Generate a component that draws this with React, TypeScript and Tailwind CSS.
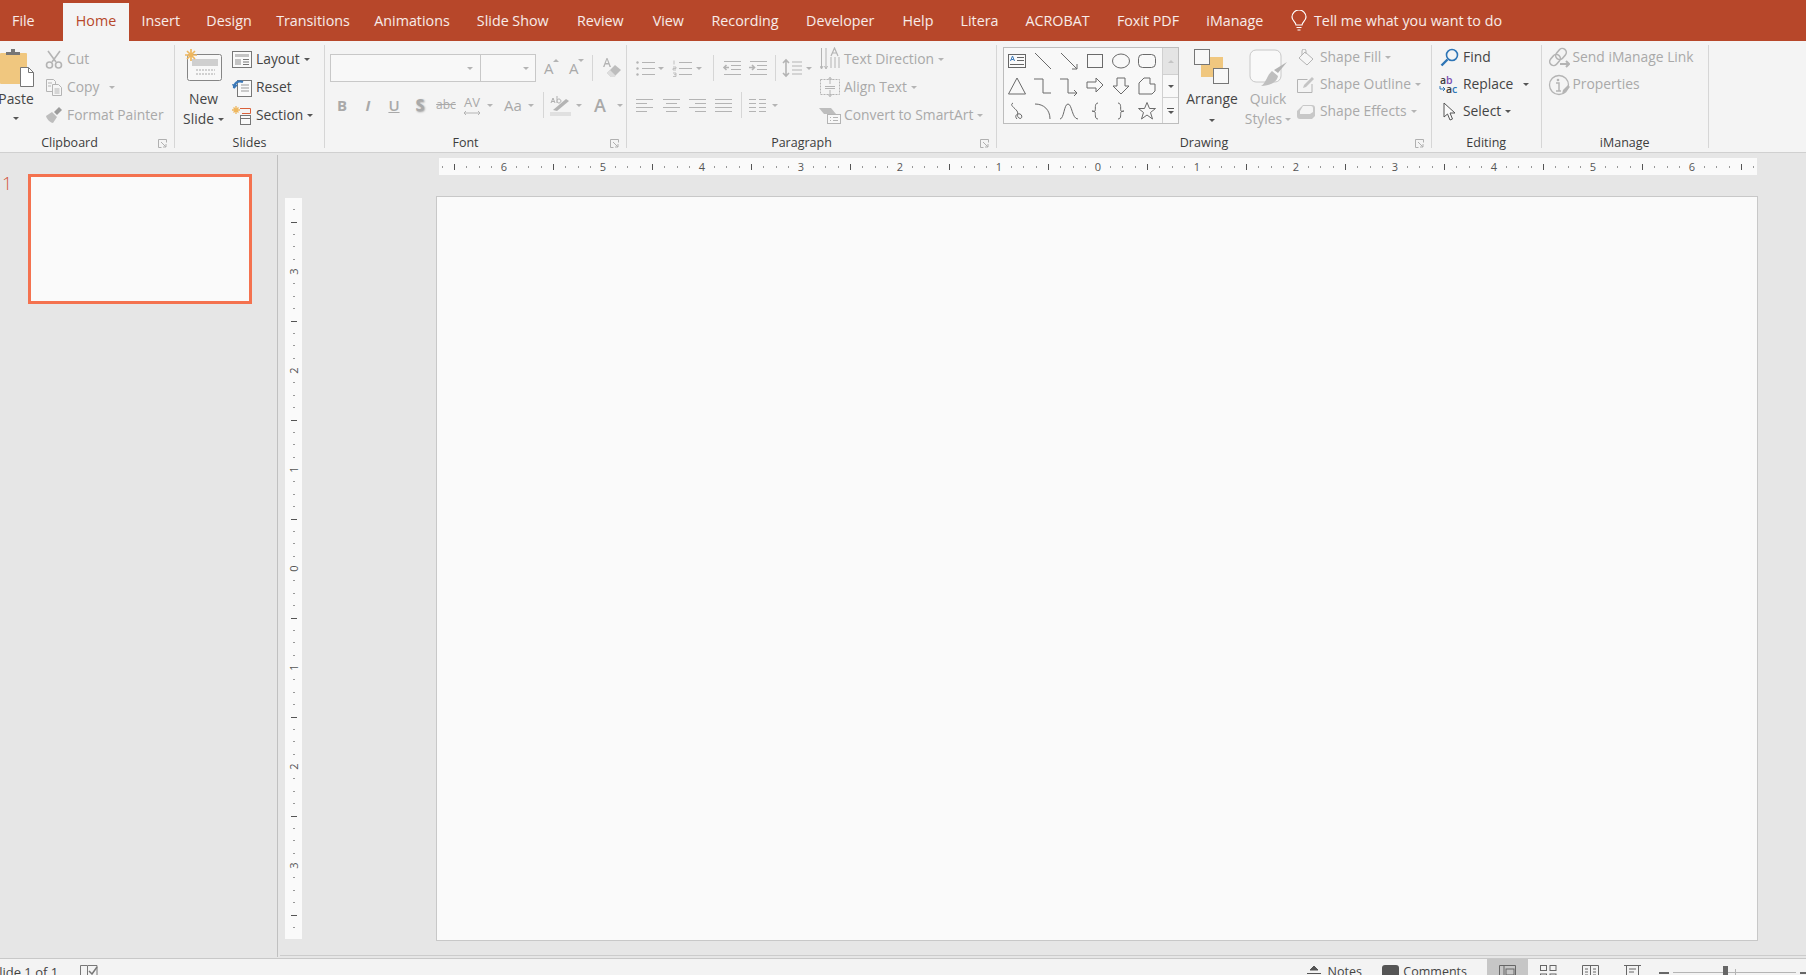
import type { ReactNode } from "react"

const TABS = [
    { name: "File", cls: "w-[63px] justify-start pl-[12px]" },
    { name: "Home", cls: "w-[66px] justify-center" },
    { name: "Insert", cls: "w-[63.5px] justify-center" },
    { name: "Design", cls: "w-[73px] justify-center" },
    { name: "Transitions", cls: "w-[95px] justify-center" },
    { name: "Animations", cls: "w-[103px] justify-center" },
    { name: "Slide Show", cls: "w-[98.5px] justify-center" },
    { name: "Review", cls: "w-[76.5px] justify-center" },
    { name: "View", cls: "w-[59.5px] justify-center" },
    { name: "Recording", cls: "w-[94px] justify-center" },
    { name: "Developer", cls: "w-[96.5px] justify-center" },
    { name: "Help", cls: "w-[59px] justify-center" },
    { name: "Litera", cls: "w-[64px] justify-center" },
    { name: "ACROBAT", cls: "w-[92px] justify-center" },
    { name: "Foxit PDF", cls: "w-[89px] justify-center" },
    { name: "iManage", cls: "w-[84.5px] justify-center" },
]

const G = "#b4b4b4"

const Caret = ({ dark = false, className = "" }: { dark?: boolean; className?: string }) => (
    <span className={`inline-block w-0 h-0 border-x-[3px] border-t-[3px] border-x-transparent ${dark ? "border-t-[#555]" : "border-t-[#b4b4b4]"} ${className}`} />
)

const Launcher = () => (
    <svg width="9" height="9" viewBox="0 0 9 9" fill="none" stroke="#b0b0b0">
        <path d="M8.5 3.5V.5H.5v8h3" />
        <path d="M3 3l5 5M8 5v3H5" />
    </svg>
)

const Group = ({ label, launcher, className, labelCls = "", children }: { label: string; launcher?: boolean; className: string; labelCls?: string; children: ReactNode }) => (
    <div className={`shrink-0 h-[103px] border-r border-[#d6d6d6] flex flex-col ${className}`}>
        <div className="h-[88px] flex text-[13.85px]">{children}</div>
        <div className="h-[15px] flex leading-[19px] text-[12.5px] text-[#3c3c3c]">
            <span className={`flex-1 text-center ${labelCls}`}>{label}</span>
            {launcher && <span className="w-[20px] pt-[6px] pl-[4px]"><Launcher /></span>}
        </div>
    </div>
)

const Row = ({ icon, text, off, h = "h-[28px]", caret, iconCls = "w-[22px]" }: { icon: ReactNode; text: string; off?: boolean; h?: string; caret?: boolean; iconCls?: string }) => (
    <div className={`flex items-center ${h}`}>
        <span className={`flex justify-center shrink-0 ${iconCls}`}>{icon}</span>
        <span className={`ml-[3px] whitespace-nowrap ${off ? "text-[#a9a9a9]" : "text-[#444]"}`}>{text}</span>
        {caret && <Caret dark={!off} className="ml-[4px]" />}
    </div>
)

const Sep = ({ cls }: { cls: string }) => <span className={`w-px h-[26px] bg-[#d6d6d6] shrink-0 ${cls}`} />

// ribbon drawings
const PasteIcon = () => (
    <svg width="36" height="38" viewBox="0 0 36 38">
        <rect x="2" y="4" width="27" height="31" rx="1" fill="#f0c77f" />
        <path d="M8 6V3h5V0h4v3h5v3z" fill="#767676" />
        <path d="M22.5 18.5h8l5 5v14h-13z" fill="#fff" stroke="#767676" />
        <path d="M30.5 18.5v5h5" fill="none" stroke="#767676" />
    </svg>
)
const CutIcon = () => (
    <svg width="18" height="19" viewBox="0 0 18 19" fill="none" stroke={G} strokeWidth="1.6">
        <path d="M3 1l8 11M15 1L7 12" />
        <circle cx="4.5" cy="15" r="3" />
        <circle cx="13.5" cy="15" r="3" />
    </svg>
)
const CopyIcon = () => (
    <svg width="18" height="19" viewBox="0 0 18 19" fill="#f6f6f6" stroke={G}>
        <path d="M1.5 1.5h7l2 2v10h-9z" />
        <path d="M7.5 6.5h6l3 3v8h-9z" />
        <path d="M3 5h4M3 8h3M9.5 11h5M9.5 13h5M9.5 15h5" />
    </svg>
)
const BrushIcon = () => (
    <svg width="18" height="16" viewBox="0 0 18 16">
        <path d="M1 9l6-4 5 5-4 6c-2 0-6-3-7-7z" fill="#bdbdbd" />
        <path d="M9 5l5-5 3 3-5 5z" fill="#9c9c9c" />
    </svg>
)
const NewSlideIcon = () => (
    <svg width="40" height="32" viewBox="0 0 40 32">
        <rect x="3.5" y="5.5" width="34" height="26" rx="2" fill="#f8f8f8" stroke="#858585" />
        <rect x="8" y="10" width="26" height="7" fill="#cfcfcf" />
        <path d="M12 21h19M12 25h19" stroke="#a8a8a8" strokeDasharray="2 1" />
        <path d="M7 0v12M1 6h12M3 2l8 8M11 2l-8 8" stroke="#eeb75e" strokeWidth="1.7" />
    </svg>
)
const LayoutIcon = () => (
    <svg width="20" height="17" viewBox="0 0 20 17" fill="none" stroke="#777">
        <rect x=".5" y=".5" width="19" height="16" fill="#fafafa" />
        <rect x="3" y="3" width="14" height="3" fill="#c4c4c4" stroke="none" />
        <rect x="3" y="8" width="6" height="6" fill="#c4c4c4" stroke="none" />
        <path d="M11 8.5h6M11 11h6M11 13.5h6" />
    </svg>
)
const ResetIcon = () => (
    <svg width="20" height="19" viewBox="0 0 20 19" fill="none">
        <rect x="5.5" y="2.5" width="14" height="16" fill="#fafafa" stroke="#777" />
        <path d="M9 7h8M9 10h8M9 13h8" stroke="#999" />
        <path d="M2 10C2 5 6 2 11 4" stroke="#3b78b8" strokeWidth="2.2" />
        <path d="M0 6l2 5 4-4z" fill="#3b78b8" />
    </svg>
)
const SectionIcon = () => (
    <svg width="20" height="19" viewBox="0 0 20 19" fill="none">
        <path d="M4 0v8M0 4h8M1.5 1.5l5 5M6.5 1.5l-5 5" stroke="#eeb75e" strokeWidth="1.3" />
        <path d="M8 2.5h10.5v5H10" stroke="#d9603a" />
        <rect x="8.5" y="9.5" width="10" height="9" fill="#fafafa" stroke="#777" />
        <path d="M8 12.5h11" stroke="#777" />
    </svg>
)
const GrowA = ({ down }: { down?: boolean }) => (
    <span className="flex items-start w-[16px] text-[15px] leading-[24px] text-[#a9a9a9]">
        A
        {down ? <Caret className="-ml-px mt-[3px]" /> : <span className="-ml-px mt-[3px] w-0 h-0 border-x-[3px] border-b-[3px] border-x-transparent border-b-[#b4b4b4]" />}
    </span>
)
const EraserIcon = () => (
    <svg width="20" height="20" viewBox="0 0 20 20">
        <path d="M4.500 0L1 9h1.500l.8-2.500h3.400L7.500 9H9L5.500 0zM3.800 5L5 1.800 6.200 5z" fill="#b4b4b4" />
        <path d="M5 15l8-8 6 5-7 7H9z" fill="#bdbdbd" />
        <path d="M5 15l3-3 6 6-2 1H9z" fill="#ddd" />
    </svg>
)
const ListIcon = ({ numbered }: { numbered?: boolean }) => (
    <svg width="20" height="18" viewBox="0 0 20 18" stroke={G} fill={G}>
        <path d="M7 3.5h13M7 9.5h13M7 15.5h13" fill="none" />
        {numbered ? (
            <path d="M2 1.500v4M1 8h3v1.500H1V11h3M1 14h3v3.500H1M2 15.700h2" fill="none" strokeWidth=".8" />
        ) : (
            <>
                <circle cx="2.5" cy="3.5" r="1.2" stroke="none" />
                <circle cx="2.5" cy="9.5" r="1.2" stroke="none" />
                <circle cx="2.5" cy="15.5" r="1.2" stroke="none" />
            </>
        )}
    </svg>
)
const IndentIcon = ({ inc }: { inc?: boolean }) => (
    <svg width="20" height="16" viewBox="0 0 20 16" fill="none" stroke={G}>
        <path d="M2 1.500h17M9 5.500h10M9 9.500h10M2 14.500h17" />
        {inc ? <path d="M1 7.500h5M4 5l2.500 2.500L4 10" strokeWidth="1.6" /> : <path d="M7 7.500H2M4.500 5L2 7.500 4.500 10" strokeWidth="1.6" />}
    </svg>
)
const LineSpacingIcon = () => (
    <svg width="20" height="20" viewBox="0 0 20 20" fill="none" stroke={G}>
        <path d="M4 2v16M1 5l3-3 3 3M1 15l3 3 3-3" strokeWidth="1.6" />
        <path d="M10 4h10M10 8h10M10 12h10M10 16h10" />
    </svg>
)
const AlignIcon = ({ kind }: { kind: string }) => {
    const d = {
        left: "M1 3.5h17M1 7.5h11M1 11.5h17M1 15.5h11",
        center: "M1 3.5h17M4 7.5h11M1 11.5h17M4 15.5h11",
        right: "M1 3.5h17M7 7.5h11M1 11.5h17M7 15.5h11",
        just: "M1 3.5h17M1 7.5h17M1 11.5h17M1 15.5h17",
        cols: "M1 3.5h7M11 3.5h7M1 7.5h7M11 7.5h7M1 11.5h7M11 11.5h7M1 15.5h7M11 15.5h7",
    }[kind]
    return <svg width="19" height="18" viewBox="0 0 19 18" fill="none" stroke={G}><path d={d} /></svg>
}
const TextDirIcon = () => (
    <svg width="20" height="24" viewBox="0 0 20 24" fill="none" stroke={G}>
        <path d="M1.5 1v20M6 1v20M11 10v11M15 10v11M19 10v11" />
        <path d="M0 19l1.5 3 1.5-3M4.500 19l1.500 3 1.500-3" />
        <path d="M11 9l3.500-8 3.500 8M12.500 6h4" strokeWidth="1.2" />
    </svg>
)
const AlignTextIcon = () => (
    <svg width="20" height="20" viewBox="0 0 20 20" fill="none" stroke={G}>
        <rect x=".5" y="2.5" width="19" height="15" strokeDasharray="2 1" />
        <path d="M10 0v7M7.500 3L10 .5 12.500 3M10 20v-7M7.500 17l2.500 2.500 2.500-2.500M5 9.500h10M5 11.500h10" />
    </svg>
)
const SmartArtIcon = () => (
    <svg width="22" height="17" viewBox="0 0 22 17">
        <path d="M0 1h12l5 6H5z" fill="#bdbdbd" />
        <rect x="8.5" y="7.5" width="13" height="9" fill="#f8f8f8" stroke={G} />
        <path d="M11 10.500h1M14 10.500h5M11 13.500h1M14 13.500h5" stroke={G} />
    </svg>
)
const ArrangeIcon = () => (
    <svg width="36" height="35" viewBox="0 0 36 35">
        <rect x="7" y="8" width="22" height="20" fill="#f0c77f" />
        <rect x=".5" y=".5" width="15" height="15" fill="#f8f8f8" stroke="#767676" />
        <rect x="19.5" y="19.5" width="15" height="15" fill="#f8f8f8" stroke="#767676" />
    </svg>
)
const QuickStylesIcon = () => (
    <svg width="38" height="38" viewBox="0 0 38 38">
        <rect x="1" y="1" width="31" height="32" rx="6" fill="#f9f9f9" stroke="#c8c8c8" />
        <path d="M38 13l-9 11-4-3z" fill="#b4b4b4" />
        <path d="M23 22l6 5c-1 6-8 10-17 10 5-3 6-11 11-15z" fill="#bfbfbf" />
    </svg>
)
const FillIcon = () => (
    <svg width="18" height="18" viewBox="0 0 18 18" fill="none" stroke={G}>
        <path d="M8 3l8 7-6 6-8-7z" fill="#f6f6f6" />
        <path d="M5 6V2a2 2 0 0 1 4 0v3" />
    </svg>
)
const OutlineIcon = () => (
    <svg width="20" height="18" viewBox="0 0 20 18" fill="none" stroke={G}>
        <path d="M16 8v8.500H1.500V3.500h10" />
        <path d="M7 12l1-3 8-8 2 2-8 8z" fill="#c4c4c4" stroke="none" />
    </svg>
)
const EffectsIcon = () => (
    <svg width="18" height="18" viewBox="0 0 18 18">
        <path d="M6 2h9a3 3 0 0 1 3 3v8l-3 3H3a3 3 0 0 1-3-3V8z" fill="#c8c8c8" />
        <path d="M6 3h8a2 2 0 0 1 2 2v4l-3 2H3V8z" fill="#f4f4f4" />
    </svg>
)
const FindIcon = () => (
    <svg width="19" height="19" viewBox="0 0 19 19" fill="none" stroke="#2e75b6">
        <circle cx="12" cy="7" r="5.500" strokeWidth="1.6" />
        <path d="M7.500 11.500L1.500 17.500" strokeWidth="2.4" />
    </svg>
)
const ReplaceIcon = () => (
    <svg width="20" height="20" viewBox="0 0 20 20" fill="none">
        <text x="1" y="9" fontSize="10.5" fontWeight="600" fontFamily="Open Sans" fill="#3b3b3b">a<tspan fill="#7c4fb0">b</tspan></text>
        <text x="7" y="18" fontSize="10.5" fontWeight="600" fontFamily="Open Sans" fill="#3b3b3b">a<tspan fill="#2e75b6">c</tspan></text>
        <path d="M1 11v3h5M4 12l2 2-2 2" stroke="#2e75b6" />
    </svg>
)
const SelectIcon = () => (
    <svg width="14" height="19" viewBox="0 0 14 19" fill="#fafafa" stroke="#555">
        <path d="M2 1v14l3.500-3 2.500 6 2.500-1-2.500-6H13z" />
    </svg>
)
const LinkIcon = () => (
    <svg width="22" height="22" viewBox="0 0 22 22" fill="none" stroke={G} strokeWidth="1.6">
        <rect x="9" y="1" width="8" height="12" rx="4" transform="rotate(40 13 7)" />
        <rect x="3" y="7" width="8" height="12" rx="4" transform="rotate(40 7 13)" />
        <path d="M12 17h9M18 14l3 3-3 3" strokeWidth="2" />
    </svg>
)
const PropsIcon = () => (
    <svg width="22" height="22" viewBox="0 0 22 22" fill="none">
        <circle cx="11" cy="11" r="9.500" stroke={G} strokeWidth="1.3" />
        <circle cx="10" cy="6" r="1.300" fill={G} />
        <path d="M8 9h3v8M8 17h5" stroke={G} strokeWidth="1.500" />
        <path d="M14 20l1-4 5-5 2 2-5 5z" fill={G} />
    </svg>
)

const SHAPES: ReactNode[] = [
    <><rect x="1.500" y="3.500" width="17" height="13" fill="#fafafa" stroke="#666" /><path d="M3.500 10l2-5 2 5M4.300 8.500h2.400" stroke="#3b78b8" /><path d="M10 6.500h7M10 9.500h7M3 13.500h14" stroke="#666" /></>,
    <path d="M2 2l16 16" />,
    <><path d="M2 2l16 16" /><path d="M13 18h5v-5" /></>,
    <rect x="2.500" y="3.500" width="15" height="13" />,
    <ellipse cx="10" cy="10" rx="8.500" ry="7" />,
    <rect x="1.500" y="3.500" width="17" height="13" rx="4" />,
    <path d="M10 2l8.500 16h-17z" />,
    <path d="M1 3h9v14h8" />,
    <><path d="M1 3h8v14h9" /><path d="M15 14l3 3-3 3" /></>,
    <path d="M2 6h9V2l7 7-7 7v-4H2z" />,
    <path d="M6 2h8v8h4l-8 8-8-8h4z" />,
    <path d="M2 18V7l5-5h6v6h5v7l-3 3z" />,
    <path d="M6 2c-4 2 2 5 4 8s-1 5 2 7 4-3 1-4-6 2-3 5" />,
    <path d="M2 3c9 0 15 6 15 15" />,
    <path d="M1 18c4 0 4-15 8-15s4 15 10 15" />,
    <path d="M13 2c-4 0-2 7-3 8-1 1-3 0-3 0s2 0 3 1c1 1-1 7 3 7" />,
    <path d="M7 2c4 0 2 7 3 8 1 1 3 0 3 0s-2 0-3 1c-1 1 1 7-3 7" />,
    <path d="M10 1.500l2.500 6h6l-5 4 2 6.500-5.500-4-5.500 4 2-6.500-5-4h6z" />,
]

const Gallery = () => (
    <div className="ml-[6px] mt-[2px] w-[176px] h-[77px] border border-[#bdbdbd] bg-[#f8f8f8] flex">
        <div className="w-[158px] grid grid-cols-6 grid-rows-3 pr-[2px]">
            {SHAPES.map((s, i) => (
                <span key={i} className="flex items-center justify-center">
                    <svg width="20" height="20" viewBox="0 0 20 20" fill="none" stroke="#6a6a6a">{s}</svg>
                </span>
            ))}
        </div>
        <div className="flex-1 flex flex-col border-l border-[#d0d0d0]">
            <span className="h-[26px] bg-[#e4e4e4] flex items-center justify-center">
                <span className="w-0 h-0 border-x-[3px] border-b-[3px] border-x-transparent border-b-[#c4c4c4]" />
            </span>
            <span className="h-[24px] border-y border-[#d0d0d0] flex items-center justify-center"><Caret dark /></span>
            <span className="flex-1 flex flex-col items-center justify-center gap-[2px]">
                <span className="w-[7px] h-px bg-[#555]" />
                <Caret dark />
            </span>
        </div>
    </div>
)

const Ribbon = () => (
    <div className="h-[112px] bg-[#f4f4f4] border-b border-[#d0d0d0] flex pt-1">
        <Group label="Clipboard" launcher className="w-[182px] -ml-[7px]" labelCls="pr-[8px]">
            <div className="w-[46px] flex flex-col items-center pt-[4px] text-[#444]">
                <PasteIcon />
                <span className="mt-[2px] leading-[20px]">Paste</span>
                <Caret dark className="mt-[8px]" />
            </div>
            <div className="ml-[5px] flex flex-col">
                <Row icon={<CutIcon />} text="Cut" off iconCls="w-[20px]" />
                <div className="flex items-center">
                    <Row icon={<CopyIcon />} text="Copy" off iconCls="w-[20px]" />
                    <Caret className="ml-[10px]" />
                </div>
                <Row icon={<BrushIcon />} text="Format Painter" off iconCls="w-[20px]" />
            </div>
        </Group>

        <Group label="Slides" className="w-[150px]">
            <div className="w-[57px] -mr-px flex flex-col items-center pt-[4px] text-[#444]">
                <NewSlideIcon />
                <span className="mt-[8px] leading-[20px]">New</span>
                <span className="leading-[20px] flex items-center">Slide<Caret dark className="ml-[4px]" /></span>
            </div>
            <div className="flex flex-col">
                <Row icon={<LayoutIcon />} text="Layout" caret />
                <Row icon={<ResetIcon />} text="Reset" />
                <Row icon={<SectionIcon />} text="Section" caret />
            </div>
        </Group>

        <Group label="Font" launcher className="w-[302px]">
            <div className="flex flex-col pt-[9px] pl-[5px]">
                <div className="h-[28px] flex items-center">
                    <div className="w-[151px] h-[28px] border border-[#c8c8c8] bg-[#f8f8f8] flex items-center justify-end pr-[7px]"><Caret /></div>
                    <div className="w-[55px] h-[28px] border border-l-0 border-[#c8c8c8] bg-[#f8f8f8] flex items-center justify-end pr-[6px]"><Caret /></div>
                    <span className="ml-[8px]"><GrowA /></span>
                    <span className="ml-[9px]"><GrowA down /></span>
                    <Sep cls="ml-[7px]" />
                    <span className="ml-[9px]"><EraserIcon /></span>
                </div>
                <div className="mt-[11px] -ml-px h-[24px] flex items-center text-[#a9a9a9]">
                    <span className="w-[26px] text-center text-[15px] font-bold">B</span>
                    <span className="w-[26px] text-center text-[15px] font-bold italic">I</span>
                    <span className="w-[26px] text-center text-[15px] font-semibold underline">U</span>
                    <span className="w-[26px] text-center text-[16px] font-bold [text-shadow:1px_1px_2px_#999]">S</span>
                    <span className="w-[26px] text-center text-[12px] line-through">abc</span>
                    <span className="w-[26px] flex flex-col items-center text-[13px] leading-[15px]">AV
                        <svg width="18" height="6" viewBox="0 0 18 6" fill="none" stroke={G}><path d="M1 3h16M3 1L1 3l2 2M15 1l2 2-2 2" /></svg>
                    </span>
                    <Caret className="ml-[2px]" />
                    <span className="ml-[6px] w-[28px] text-center text-[15px]">Aa</span>
                    <Caret className="ml-[1px]" />
                    <Sep cls="ml-[9px]" />
                    <span className="ml-[5px] w-[22px] flex flex-col items-center">
                        <svg width="21" height="21" viewBox="0 0 21 21">
                            <path d="M3 15L16 4l3 2-12 10z" fill="#b4b4b4" />
                            <path d="M1 8l2-5 2 5M1.700 6.500h2.600M7 1v7M7 5.500a2 2 0 1 1 0 1" fill="none" stroke="#b0b0b0" />
                            <rect x="0" y="17" width="21" height="4" fill="#e0e0e0" />
                        </svg>
                    </span>
                    <Caret className="ml-[5px]" />
                    <span className="ml-[8px] w-[20px] text-center text-[18px] font-semibold">A</span>
                    <Caret className="ml-[7px]" />
                </div>
            </div>
        </Group>

        <Group label="Paragraph" launcher className="w-[370px]">
            <div className="w-[192px] flex flex-col pt-[9px] shrink-0">
                <div className="h-[28px] flex items-center">
                    <span className="ml-[8px]"><ListIcon /></span>
                    <Caret className="ml-[3px]" />
                    <span className="ml-[8px]"><ListIcon numbered /></span>
                    <Caret className="ml-[4px]" />
                    <Sep cls="ml-[11px]" />
                    <span className="ml-[8px]"><IndentIcon /></span>
                    <span className="ml-[6px]"><IndentIcon inc /></span>
                    <Sep cls="ml-[7px]" />
                    <span className="ml-[6px]"><LineSpacingIcon /></span>
                    <Caret className="ml-[4px]" />
                </div>
                <div className="mt-[11px] h-[24px] flex items-center">
                    <span className="ml-[8px]"><AlignIcon kind="left" /></span>
                    <span className="ml-[8px]"><AlignIcon kind="center" /></span>
                    <span className="ml-[7px]"><AlignIcon kind="right" /></span>
                    <span className="ml-[7px]"><AlignIcon kind="just" /></span>
                    <Sep cls="ml-[8px]" />
                    <span className="ml-[6px]"><AlignIcon kind="cols" /></span>
                    <Caret className="ml-[5px]" />
                </div>
            </div>
            <div className="flex flex-col">
                <Row icon={<TextDirIcon />} text="Text Direction" off caret />
                <Row icon={<AlignTextIcon />} text="Align Text" off caret />
                <Row icon={<SmartArtIcon />} text="Convert to SmartArt" off caret />
            </div>
        </Group>

        <Group label="Drawing" launcher className="w-[435px]">
            <Gallery />
            <div className="w-[66px] flex flex-col items-center pt-[4px] text-[#444]">
                <ArrangeIcon />
                <span className="mt-[5px] leading-[20px]">Arrange</span>
                <Caret dark className="mt-[10px]" />
            </div>
            <div className="w-[46px] flex flex-col items-center pt-[4px] text-[#a9a9a9]">
                <QuickStylesIcon />
                <span className="mt-[2px] leading-[20px]">Quick</span>
                <span className="leading-[20px] flex items-center">Styles<Caret className="ml-[3px]" /></span>
            </div>
            <div className="ml-[4px] -mt-px flex flex-col">
                <Row h="h-[27px]" icon={<FillIcon />} text="Shape Fill" off caret />
                <Row h="h-[27px]" icon={<OutlineIcon />} text="Shape Outline" off caret />
                <Row h="h-[27px]" icon={<EffectsIcon />} text="Shape Effects" off caret />
            </div>
        </Group>

        <Group label="Editing" className="w-[109.500px]">
            <div className="ml-[6px] -mt-px flex flex-col">
                <Row h="h-[27px]" icon={<FindIcon />} text="Find" />
                <div className="flex items-center">
                    <Row h="h-[27px]" icon={<ReplaceIcon />} text="Replace" />
                    <Caret dark className="ml-[10px]" />
                </div>
                <Row h="h-[27px]" icon={<SelectIcon />} text="Select" caret />
            </div>
        </Group>

        <Group label="iManage" className="w-[167.500px]">
            <div className="ml-[6px] -mt-px flex flex-col">
                <Row h="h-[27px]" icon={<LinkIcon />} text="Send iManage Link" off />
                <Row h="h-[27px]" icon={<PropsIcon />} text="Properties" off />
            </div>
        </Group>
    </div>
)

const TICKS = (n: number) => Array.from({ length: n * 2 + 1 }, (_, i) => i - n)

const HRuler = () => (
    <div className="ml-[159px] w-[1318px] h-[17px] bg-[#fafafa] flex justify-center items-center overflow-hidden">
        {TICKS(53).map((t) => (
            <span key={t} className="w-[12.375px] shrink-0 flex justify-center items-center">
                {t % 8 === 0 ? (
                    <span className="text-[11px] leading-none text-[#555]">{Math.abs(t / 8)}</span>
                ) : t % 4 === 0 ? (
                    <span className="w-px h-[6px] bg-[#555]" />
                ) : (
                    <span className="w-px h-[2px] bg-[#999]" />
                )}
            </span>
        ))}
    </div>
)

const VRuler = () => (
    <div className="ml-[5px] mt-[2px] w-[17px] h-[741px] bg-[#fafafa] flex flex-col justify-center items-center overflow-hidden">
        {TICKS(30).map((t) => (
            <span key={t} className="h-[12.375px] shrink-0 flex justify-center items-center">
                {t % 8 === 0 ? (
                    <span className="text-[11px] leading-none text-[#555] -rotate-90">{Math.abs(t / 8)}</span>
                ) : t % 4 === 0 ? (
                    <span className="w-[6px] h-px bg-[#555]" />
                ) : (
                    <span className="w-[2px] h-px bg-[#999]" />
                )}
            </span>
        ))}
    </div>
)

const StatusBar = () => (
    <div className="h-[27px] bg-[#f3f3f3] border-t border-[#c8c8c8] flex text-[12.5px] text-[#444] leading-[26px]">
        <span className="-ml-[8px] w-[89px] text-[13px] whitespace-nowrap">Slide 1 of 1</span>
        <span className="mt-[6px]">
            <svg width="18" height="20" viewBox="0 0 18 20" fill="none" stroke="#777">
                <path d="M.5.500h7v18h-7zM8 .500h9v18H8" />
                <path d="M9 6l3 3 5-7" strokeWidth="1.500" />
            </svg>
        </span>
        <span className="ml-[1209px] mt-[7px]">
            <svg width="14" height="14" viewBox="0 0 14 14" fill="#555" stroke="#555">
                <path d="M7 0l4 4H3zM0 7.500h14M0 11.500h14" />
            </svg>
        </span>
        <span className="ml-[7px] w-[55px]">Notes</span>
        <span className="w-[18px] h-[18px] mt-[6px] rounded-[3px] bg-[#555]" />
        <span className="ml-[4px] w-[85px]">Comments</span>
        <span className="w-[42px] bg-[#c6c6c6] flex justify-center pt-[6px]">
            <svg width="17" height="20" viewBox="0 0 17 20" fill="none" stroke="#666">
                <path d="M.5.500h16v18H.5zM5 .500v18" />
                <rect x="7" y="4" width="8" height="6" />
            </svg>
        </span>
        <span className="ml-[12px] mt-[6px]">
            <svg width="17" height="20" viewBox="0 0 17 20" fill="none" stroke="#666">
                <rect x=".5" y=".5" width="6" height="5" />
                <rect x="10" y=".5" width="6" height="5" />
                <rect x=".5" y="9" width="6" height="5" />
                <rect x="10" y="9" width="6" height="5" />
            </svg>
        </span>
        <span className="ml-[25px] mt-[6px]">
            <svg width="17" height="20" viewBox="0 0 17 20" fill="none" stroke="#666">
                <path d="M.5.500h16v18H.5zM8.500 .500v18M3 4h3M3 7h3M3 10h3M11 4h3M11 7h3M11 10h3" />
            </svg>
        </span>
        <span className="ml-[25px] mt-[5px]">
            <svg width="17" height="20" viewBox="0 0 17 20" fill="none" stroke="#666">
                <path d="M0 1.500h17M2.500 1.500v10h12v-10M8.500 11.500v6M5 5h7M5 8h5" />
            </svg>
        </span>
        <span className="ml-[18px] mt-[13px] w-[10px] h-[2px] bg-[#666]" />
        <span className="ml-[4px] mt-[13px] w-[125px] h-px bg-[#b4b4b4] flex items-center">
            <span className="ml-[50px] w-[5px] h-[14px] bg-[#666]" />
            <span className="ml-[7px] w-px h-[8px] bg-[#b4b4b4]" />
        </span>
        <span className="ml-[4px] mt-[13px] w-[6px] h-[2px] bg-[#666]" />
    </div>
)

export default function App() {
    return (
        <div className="w-[1806px] h-[975px] overflow-hidden bg-[#e6e6e6] font-['Open_Sans',sans-serif]">
            <div className="h-[41px] bg-[#b7472a] flex text-[14.3px] text-white/90">
                {TABS.map((t) =>
                    t.name === "Home" ? (
                        <div key={t.name} className={`mt-[3px] bg-[#f4f4f4] text-[#b7472a] flex items-center pb-[2px] ${t.cls}`}>{t.name}</div>
                    ) : (
                        <div key={t.name} className={`flex items-center pt-px ${t.cls}`}>{t.name}</div>
                    )
                )}
                <div className="ml-[14px] flex items-center">
                    <svg width="16" height="21" viewBox="0 0 16 21" fill="none" stroke="#fff" strokeWidth="1.200">
                        <path d="M5 15c0-3-4-4-4-8a7 7 0 0 1 14 0c0 4-4 5-4 8z" />
                        <path d="M5.500 17.500h5M6.500 20h3" />
                    </svg>
                    <span className="ml-[7px] pt-px">Tell me what you want to do</span>
                </div>
            </div>

            <Ribbon />

            <div className="h-[805px] flex">
                <div className="w-[278px] h-[802px] mt-[2px] border-r border-[#c0c0c0] flex items-start pt-[15px]">
                    <span className="ml-[2px] w-[26px] text-[18px] leading-[26px] font-light text-[#d2563a]">1</span>
                    <div className="mt-[4px] w-[224px] h-[130px] border-[3px] border-[#f4724f] bg-[#fafafa]" />
                </div>
                <div className="flex-1 h-[803px] ml-[2px] border-b border-[#cccccc] pt-[5px]">
                    <HRuler />
                    <div className="flex mt-[21px]">
                        <VRuler />
                        <div className="ml-[134px] w-[1322px] h-[745px] bg-[#fafafa] border border-[#c8c8c8]" />
                    </div>
                </div>
            </div>

            <StatusBar />
        </div>
    )
}
